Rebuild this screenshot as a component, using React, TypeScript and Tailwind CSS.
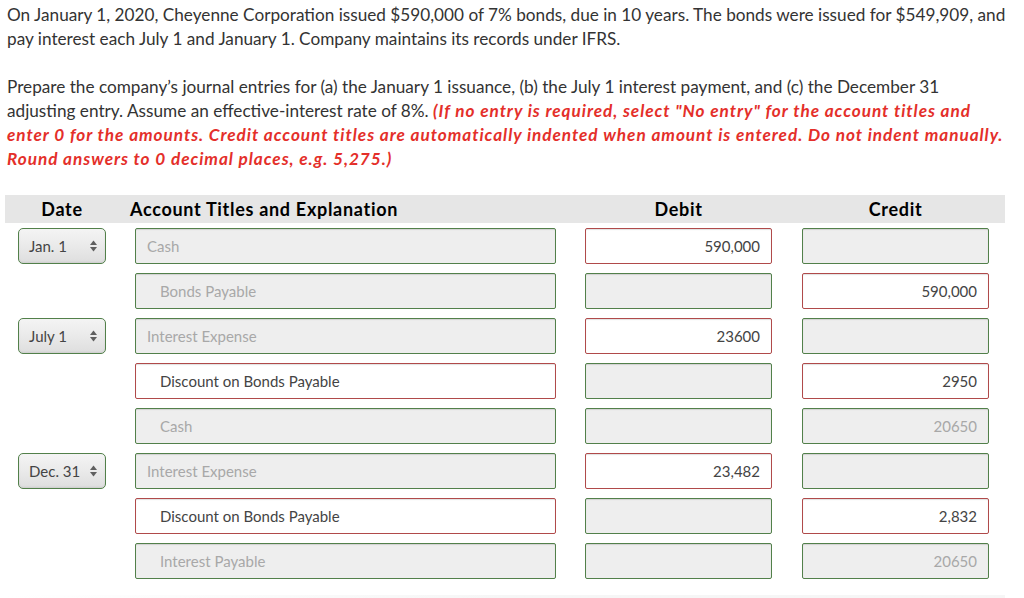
import React from "react"

type Field = { text: string; ok: boolean }
type Row = { date?: string; account: Field; indent: boolean; debit: Field; credit: Field }

const rows: Row[] = [
    { date: "Jan. 1", account: { text: "Cash", ok: true }, indent: false, debit: { text: "590,000", ok: false }, credit: { text: "", ok: true } },
    { account: { text: "Bonds Payable", ok: true }, indent: true, debit: { text: "", ok: true }, credit: { text: "590,000", ok: false } },
    { date: "July 1", account: { text: "Interest Expense", ok: true }, indent: false, debit: { text: "23600", ok: false }, credit: { text: "", ok: true } },
    { account: { text: "Discount on Bonds Payable", ok: false }, indent: true, debit: { text: "", ok: true }, credit: { text: "2950", ok: false } },
    { account: { text: "Cash", ok: true }, indent: true, debit: { text: "", ok: true }, credit: { text: "20650", ok: true } },
    { date: "Dec. 31", account: { text: "Interest Expense", ok: true }, indent: false, debit: { text: "23,482", ok: false }, credit: { text: "", ok: true } },
    { account: { text: "Discount on Bonds Payable", ok: false }, indent: true, debit: { text: "", ok: true }, credit: { text: "2,832", ok: false } },
    { account: { text: "Interest Payable", ok: true }, indent: true, debit: { text: "", ok: true }, credit: { text: "20650", ok: true } },
]

function Box({ field, align, indent }: { field: Field; align: "left" | "right"; indent?: boolean }) {
    const look = field.ok
        ? "border-[#52804a] bg-[#eeeeee] text-[#a8a8a8]"
        : "border-[#b04a4a] bg-white text-[#444444]"
    const pad = align === "right" ? "justify-end pr-[11px]" : indent ? "pl-[24px]" : "pl-[11px]"
    return (
        <div className={`h-[36px] flex items-center rounded-[2px] border shadow-[inset_0_1px_1px_rgba(0,0,0,0.12)] text-[15px] ${look} ${pad}`}>
            {field.text}
        </div>
    )
}

function DateSelect({ label }: { label: string }) {
    return (
        <div className="h-[36px] flex items-center justify-between pl-[10px] pr-[7px] rounded-[5px] border border-[#52804a] bg-gradient-to-b from-[#f4f4f4] via-[#eaeaea] to-[#dedede] shadow-[inset_0_-1px_2px_rgba(0,0,0,0.08)] text-[15px] text-[#444444]">
            <span>{label}</span>
            <svg width="9" height="14" viewBox="0 0 9 14">
                <path d="M4.5 1.5 L8 6 H1 Z" fill="#5f5f5f" />
                <path d="M4.5 12.5 L8 8 H1 Z" fill="#5f5f5f" />
            </svg>
        </div>
    )
}

export default function App() {
    return (
        <div className="w-[1024px] h-[598px] overflow-hidden bg-white pt-[3px] font-['Lato',sans-serif]">
            <div className="px-[7px] text-[17.2px] leading-[24px] text-[#333333] whitespace-nowrap">
                <p>
                    On January 1, 2020, Cheyenne Corporation issued $590,000 of 7% bonds, due in 10 years. The bonds were issued for $549,909, and
                    <br />
                    pay interest each July 1 and January 1. Company maintains its records under IFRS.
                </p>
                <p className="mt-[24px]">
                    Prepare the company’s journal entries for (a) the January 1 issuance, (b) the July 1 interest payment, and (c) the December 31
                    <br />
                    adjusting entry. Assume an effective-interest rate of 8%.{" "}
                    <span className="font-bold italic tracking-[0.95px] text-[#e42f2a]">
                        (If no entry is required, select "No entry" for the account titles and
                        <br />
                        enter 0 for the amounts. Credit account titles are automatically indented when amount is entered. Do not indent manually.
                        <br />
                        Round answers to 0 decimal places, e.g. 5,275.)
                    </span>
                </p>
            </div>

            <div className="mt-[24px] ml-[5px] w-[1000px]">
                <div className="h-[28px] bg-[#e6e6e6] pl-[13px] grid grid-cols-[88px_421px_187px_188px] gap-x-[29px] items-center text-[18px] font-bold tracking-[0.7px] text-black">
                    <div className="text-center">Date</div>
                    <div className="-ml-[5px]">Account Titles and Explanation</div>
                    <div className="text-center">Debit</div>
                    <div className="text-center ml-[1px]">Credit</div>
                </div>

                <div className="mt-[5px] pl-[13px] flex flex-col gap-[9px]">
                    {rows.map((r, i) => (
                        <div key={i} className="grid grid-cols-[88px_421px_187px_188px] gap-x-[29px]">
                            <div>{r.date ? <DateSelect label={r.date} /> : null}</div>
                            <Box field={r.account} align="left" indent={r.indent} />
                            <Box field={r.debit} align="right" />
                            <div className="ml-[1px]">
                                <Box field={r.credit} align="right" />
                            </div>
                        </div>
                    ))}
                </div>

                <div className="mt-[16px] h-[3px] bg-gradient-to-r from-white via-[#f6f6f6] to-[#f6f6f6]" />
            </div>
        </div>
    )
}
